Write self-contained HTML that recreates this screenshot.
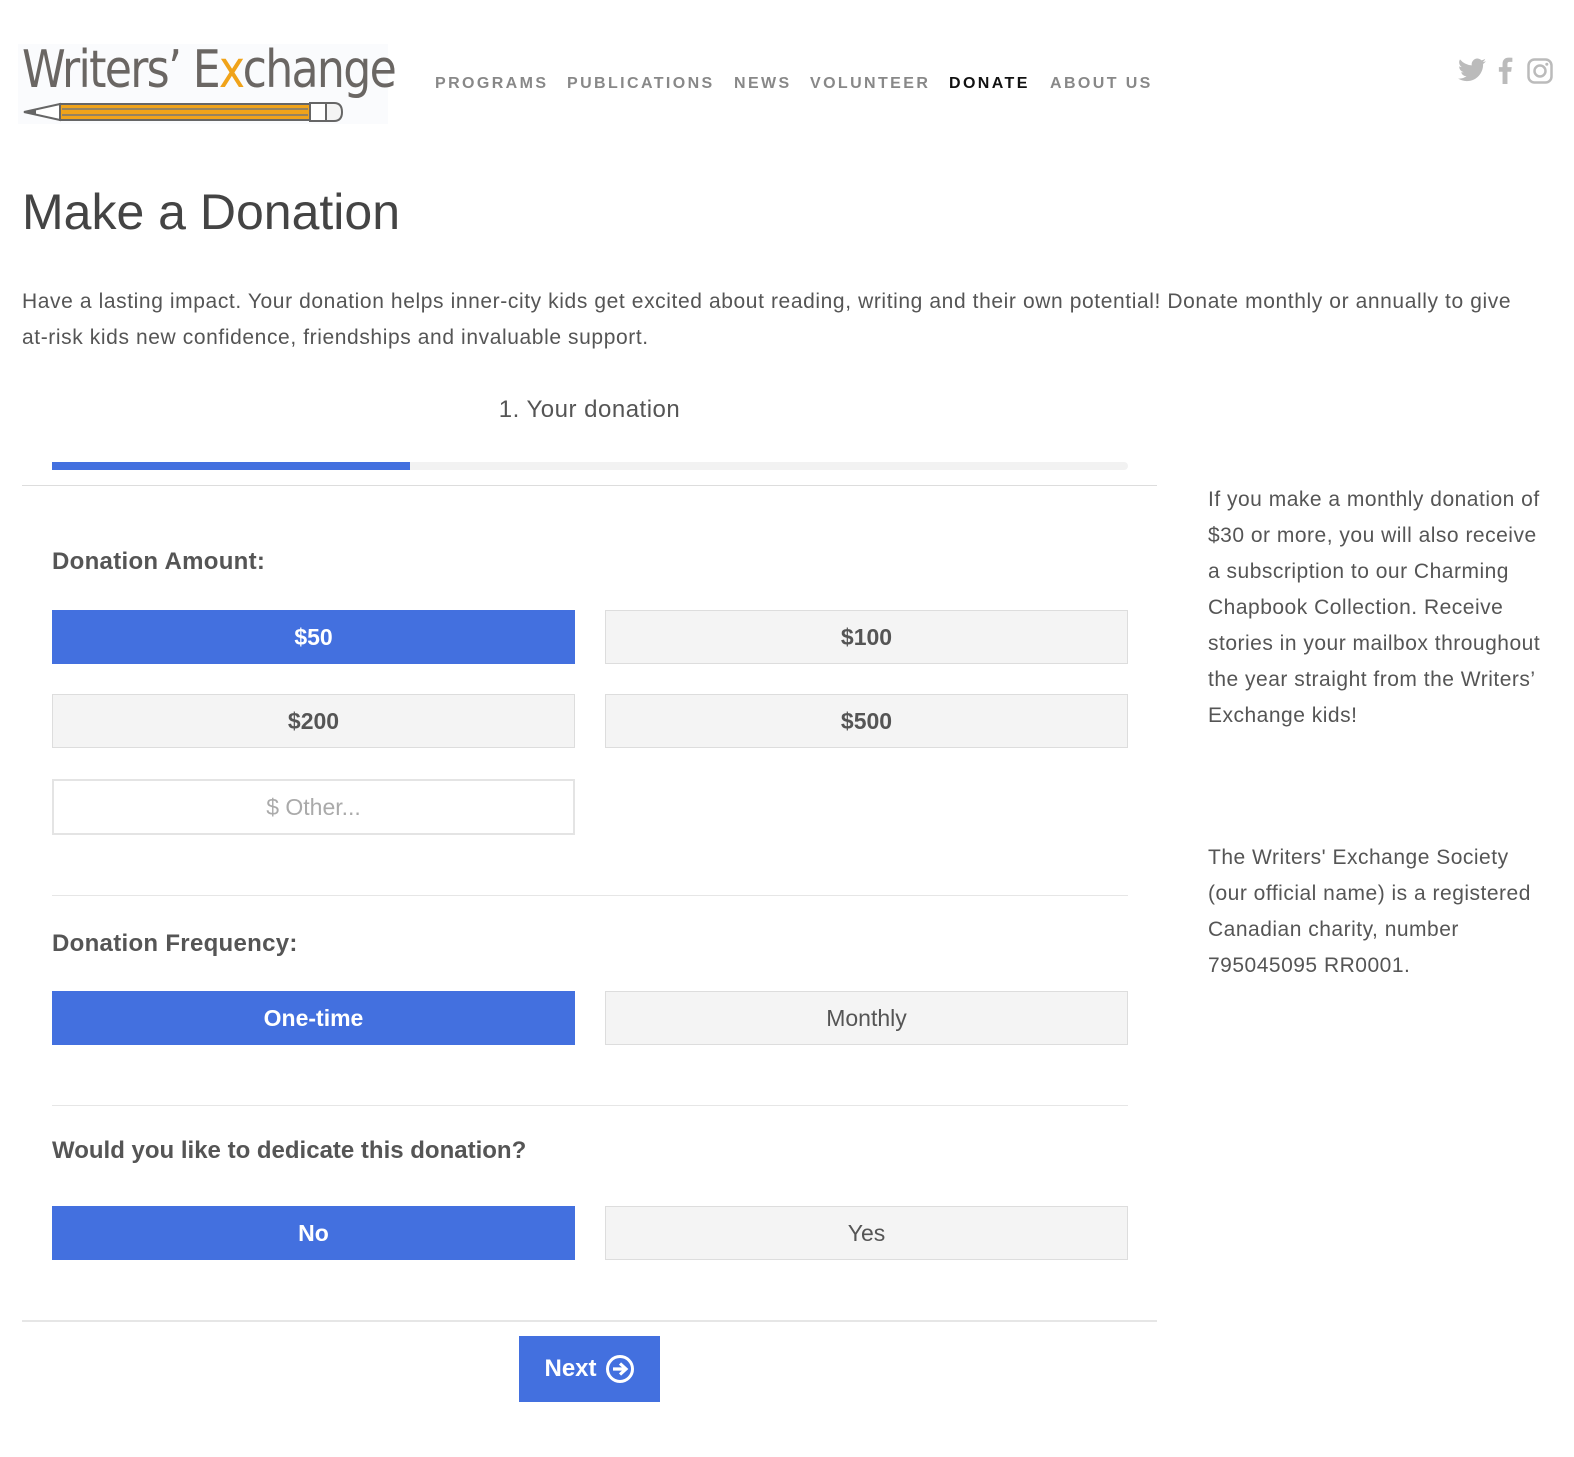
<!DOCTYPE html>
<html><head><meta charset="utf-8"><style>
*{box-sizing:border-box;margin:0;padding:0}
body{width:1574px;height:1457px;background:#fff;font-family:"Liberation Sans",sans-serif;color:#555;position:relative;overflow:hidden}
.abs{position:absolute}
.nav a{position:absolute;top:75px;font-size:16px;letter-spacing:2.4px;color:#888;font-weight:bold;text-decoration:none;white-space:nowrap}
.btn{position:absolute;width:523px;height:54px;display:flex;align-items:center;justify-content:center;font-size:23px;font-weight:bold;border:1px solid #ddd;background:#f4f4f4;color:#555}
.btn.on{background:#4370df;border-color:#4370df;color:#fff}
.lbl{position:absolute;left:52px;font-size:24px;font-weight:bold;color:#555;letter-spacing:0.3px}
.hr{position:absolute;left:52px;width:1076px;height:1px;background:#e6e6e6}
.side{position:absolute;left:1208px;width:344px;font-size:21px;letter-spacing:0.5px;line-height:36px;color:#555}
</style></head><body>
<div class="abs" style="left:18px;top:44px;width:370px;height:80px;background:#fafbfd"></div>
<div class="abs" style="left:22px;top:40px;font-family:'DejaVu Sans',sans-serif;font-size:52px;color:#6a6663;letter-spacing:-2px;white-space:nowrap;transform:scaleX(0.85);transform-origin:left">Writers’ E<span style="color:#f0a31a">x</span>change</div>
<svg class="abs" style="left:22px;top:100px" width="322" height="22" viewBox="0 0 322 22">
<path d="M2 12 L38 4 L38 20 Z" fill="#fff" stroke="#666" stroke-width="2"/>
<path d="M2 12 L14 9 L14 15Z" fill="#666"/>
<rect x="38" y="4" width="250" height="16" fill="#f0a31a" stroke="#666" stroke-width="2"/>
<path d="M40 9 H286 M40 15 H286" stroke="#777" stroke-width="1.5"/>
<rect x="288" y="3" width="16" height="18" fill="#fff" stroke="#666" stroke-width="2"/>
<path d="M304 3 H312 Q320 3 320 12 Q320 21 312 21 H304Z" fill="#f4f4f4" stroke="#666" stroke-width="2"/>
</svg>
<div class="nav">
<a style="left:435px">PROGRAMS</a><a style="left:567px">PUBLICATIONS</a><a style="left:734px">NEWS</a><a style="left:810px">VOLUNTEER</a><a style="left:949px;color:#111">DONATE</a><a style="left:1050px">ABOUT US</a>
</div>
<svg class="abs" style="left:1458px;top:58px" width="28" height="24" viewBox="0 0 24 20"><path d="M24 2.4a10 10 0 0 1-2.8.8A5 5 0 0 0 23.3.5a10 10 0 0 1-3.1 1.2A4.9 4.9 0 0 0 11.8 6 14 14 0 0 1 1.7.9a4.9 4.9 0 0 0 1.5 6.6A4.9 4.9 0 0 1 1 6.9a4.9 4.9 0 0 0 3.9 4.9 5 5 0 0 1-2.2.1 4.9 4.9 0 0 0 4.6 3.4A9.9 9.9 0 0 1 0 17.3 14 14 0 0 0 7.5 19.5c9.1 0 14-7.5 14-14v-.6A10 10 0 0 0 24 2.4z" fill="#bbb"/></svg>
<svg class="abs" style="left:1497px;top:57px" width="16" height="27" viewBox="0 0 12 22"><path d="M8 22V12h3l.5-3.8H8V5.8c0-1.1.3-1.8 1.9-1.8H12V.6A25 25 0 0 0 9 .5C6 .5 4 2.3 4 5.6v2.6H1V12h3v10z" fill="#bbb"/></svg>
<svg class="abs" style="left:1527px;top:58px" width="26" height="26" viewBox="0 0 26 26"><rect x="1.5" y="1.5" width="23" height="23" rx="6" fill="none" stroke="#bbb" stroke-width="2.5"/><circle cx="13" cy="13" r="5.5" fill="none" stroke="#bbb" stroke-width="2.5"/><circle cx="19.8" cy="6.2" r="1.5" fill="#bbb"/></svg>

<div class="abs" style="left:22px;top:183px;font-size:50px;font-weight:300;color:#444">Make a Donation</div>
<div class="abs" style="left:22px;top:284px;width:1528px;font-size:21px;letter-spacing:0.6px;line-height:36px;color:#555">Have a lasting impact. Your donation helps inner-city kids get excited about reading, writing and their own potential! Donate monthly or annually to give <span style="white-space:nowrap">at-risk</span> kids new confidence, friendships and invaluable support.</div>

<div class="abs" style="left:22px;top:396px;width:1135px;text-align:center;font-size:24px;color:#555;letter-spacing:0.5px">1. Your donation</div>
<div class="abs" style="left:52px;top:462px;width:1076px;height:8px;background:#f2f2f2;border-radius:4px"></div>
<div class="abs" style="left:52px;top:462px;width:358px;height:8px;background:#4370df"></div>
<div class="abs" style="left:22px;top:485px;width:1135px;height:1px;background:#ddd"></div>

<div class="lbl" style="top:548px">Donation Amount:</div>
<div class="btn on" style="left:52px;top:610px">$50</div>
<div class="btn" style="left:605px;top:610px">$100</div>
<div class="btn" style="left:52px;top:694px">$200</div>
<div class="btn" style="left:605px;top:694px">$500</div>
<div class="btn" style="left:52px;top:779px;height:56px;background:#fff;font-weight:normal;color:#aaa;border-width:2px;border-color:#e4e4e4">$ Other...</div>
<div class="hr" style="top:895px"></div>

<div class="lbl" style="top:930px">Donation Frequency:</div>
<div class="btn on" style="left:52px;top:991px">One-time</div>
<div class="btn" style="left:605px;top:991px;font-weight:normal">Monthly</div>
<div class="hr" style="top:1105px"></div>

<div class="lbl" style="top:1137px;letter-spacing:0">Would you like to dedicate this donation?</div>
<div class="btn on" style="left:52px;top:1206px">No</div>
<div class="btn" style="left:605px;top:1206px;font-weight:normal">Yes</div>
<div class="abs" style="left:22px;top:1320px;width:1135px;height:2px;background:#e6e6e6"></div>

<div class="abs" style="left:519px;top:1336px;width:141px;height:66px;background:#4370df;color:#fff;font-size:24px;font-weight:bold;display:flex;align-items:center;justify-content:center;gap:8px">Next <svg width="30" height="30" viewBox="0 0 30 30"><circle cx="15" cy="15" r="12.5" fill="none" stroke="#fff" stroke-width="3"/><path d="M8 15H20M15 9.5L21 15L15 20.5" fill="none" stroke="#fff" stroke-width="3.2"/></svg></div>

<div class="side" style="top:482px">If you make a monthly donation of $30 or more, you will also receive a subscription to our Charming Chapbook Collection. Receive stories in your mailbox throughout the year straight from the Writers’ Exchange kids!</div>
<div class="side" style="top:840px">The Writers' Exchange Society (our official name) is a registered Canadian charity, number 795045095 RR0001.</div>
</body></html>
